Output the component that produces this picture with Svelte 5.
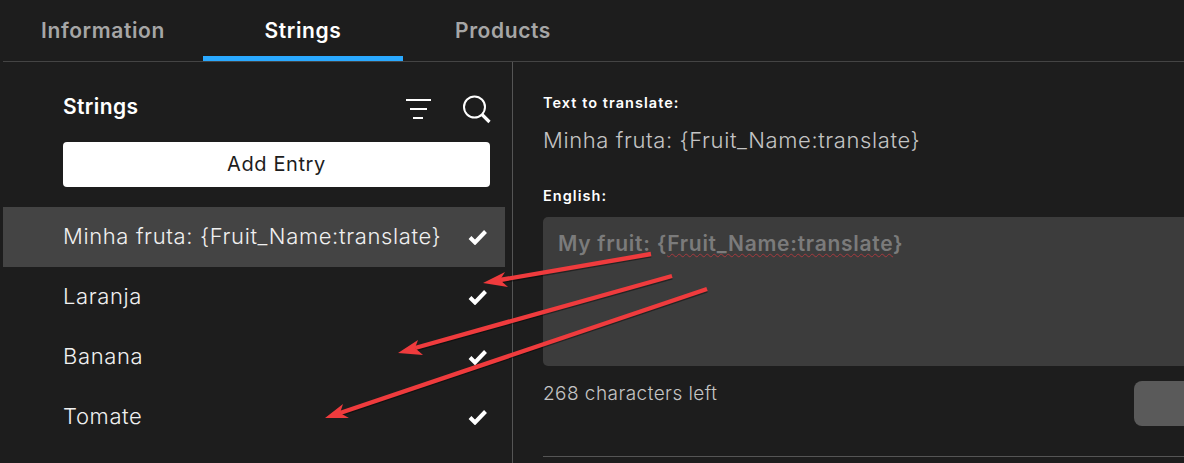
<script>
  const tabs = [
    { label: 'Information', active: false },
    { label: 'Strings', active: true },
    { label: 'Products', active: false }
  ];
  const items = ['Minha fruta: {Fruit_Name:translate}', 'Laranja', 'Banana', 'Tomate'];
  const arrows = [
    { x1: 651, y1: 254, x2: 500, y2: 280, head: '483,283 505,272 500,280 508,287' },
    { x1: 672, y1: 276, x2: 415, y2: 348, head: '398,353 418,340 415,348 423,355' },
    { x1: 707, y1: 289, x2: 340, y2: 413, head: '325,418 343,404 340,413 349,418' }
  ];
</script>

<div class="page">
  <nav class="tabs">
    {#each tabs as t}
      <div class="tab" class:active={t.active}>{t.label}</div>
    {/each}
  </nav>
  <div class="body">
    <aside class="side">
      <div class="head">
        <h2>Strings</h2>
        <div class="tools">
          <svg width="26" height="24" viewBox="0 0 26 24" fill="none" stroke="#fff" stroke-width="2">
            <path d="M0 4h25M4 13h17M7 22h10" />
          </svg>
          <svg class="search" width="28" height="28" viewBox="0 0 28 28" fill="none" stroke="#fff">
            <circle cx="11.5" cy="13" r="10.5" stroke-width="2" />
            <path d="M19 20.5l7.5 7.5" stroke-width="3.2" />
          </svg>
        </div>
      </div>
      <button class="add">Add Entry</button>
      <ul>
        {#each items as item, i}
          <li class:sel={i === 0}>
            <span>{item}</span>
            <svg width="20" height="16" viewBox="0 0 20 16" fill="none" stroke="#fff" stroke-width="4">
              <path d="M2 8.5l5 5L17.5 2.5" />
            </svg>
          </li>
        {/each}
      </ul>
    </aside>
    <main class="detail">
      <div class="label first">Text to translate:</div>
      <div class="source">Minha fruta: {'{'}Fruit_Name:translate{'}'}</div>
      <div class="label second">English:</div>
      <div class="area">My fruit: {'{'}<span class="wavy">Fruit_Name:translate</span>{'}'}</div>
      <div class="foot">
        <span>268 characters left</span>
        <div class="save"></div>
      </div>
      <hr />
    </main>
  </div>
  <svg class="overlay" width="1184" height="463" viewBox="0 0 1184 463">
    {#each arrows as a}
      <line x1={a.x1} y1={a.y1 + 1.5} x2={a.x2} y2={a.y2 + 1.5} stroke="#000" stroke-opacity=".4" stroke-width="4" />
      <line x1={a.x1} y1={a.y1} x2={a.x2} y2={a.y2} stroke="#ef3b3d" stroke-width="4.4" />
      <polygon points={a.head} fill="#ef3b3d" />
    {/each}
  </svg>
</div>

<style>
  :global(body) {
    margin: 0;
    background: #1d1d1d;
    font-family: Inter, "Noto Sans", sans-serif;
    overflow: hidden;
  }
  .page {
    position: relative;
    width: 1184px;
    height: 463px;
    overflow: hidden;
    color: #fff;
  }
  .tabs {
    display: flex;
    height: 61px;
    margin-left: 3px;
    border-bottom: 1px solid #444;
  }
  .tab {
    box-sizing: border-box;
    width: 200px;
    height: 61px;
    padding-top: 18px;
    text-align: center;
    font-size: 21px;
    letter-spacing: 0.6px;
    line-height: 25px;
    font-weight: 600;
    color: #a6a6a6;
  }
  .tab.active {
    color: #fff;
    border-bottom: 5px solid #2aa9ff;
  }
  .body {
    display: flex;
    height: 401px;
  }
  .side {
    box-sizing: border-box;
    width: 513px;
    padding-left: 3px;
    border-right: 1px solid #555;
    flex: none;
  }
  .head {
    display: flex;
    justify-content: space-between;
    align-items: center;
    height: 44px;
    margin: 24px 21px 12px 60px;
  }
  h2 {
    margin: 0;
    font-size: 21px;
    letter-spacing: 0.4px;
    font-weight: 600;
    line-height: 24px;
    position: relative;
    top: -1px;
  }
  .tools {
    display: flex;
    align-items: center;
    gap: 31px;
  }
  .search {
    overflow: visible;
  }
  .add {
    display: block;
    box-sizing: border-box;
    width: 427px;
    height: 45px;
    margin-left: 60px;
    padding: 0;
    border: 0;
    border-radius: 4px;
    background: #fff;
    color: #1d1d1d;
    font: 400 20px/45px Inter, "Noto Sans", sans-serif;
    letter-spacing: 0.6px;
    text-align: center;
  }
  ul {
    list-style: none;
    margin: 20px 0 0;
    padding: 0;
    width: 502px;
  }
  li {
    display: flex;
    align-items: center;
    justify-content: space-between;
    box-sizing: border-box;
    height: 60px;
    padding: 0 17px 0 60px;
    font-size: 22px;
    font-weight: 300;
    letter-spacing: 0.63px;
    color: #f0f0f0;
  }
  li span {
    position: relative;
    top: -1px;
  }
  li.sel {
    background: #444;
  }
  .detail {
    flex: 1;
    min-width: 0;
    padding-left: 30px;
  }
  .label {
    font-size: 14.5px;
    letter-spacing: 1.05px;
    font-weight: 600;
    line-height: 18px;
    color: #fff;
  }
  .first { margin-top: 32px; }
  .second { margin-top: 34px; }
  .source {
    margin-top: 15px;
    font-size: 22px;
    font-weight: 300;
    letter-spacing: 0.6px;
    line-height: 26px;
    color: #c4c4c4;
  }
  .area {
    box-sizing: border-box;
    height: 149px;
    margin-top: 12px;
    padding: 14px 15px;
    border-radius: 5px 0 0 5px;
    background: #3c3c3c;
    color: #7b7b7b;
    font-size: 21px;
    letter-spacing: 0.72px;
    line-height: 25px;
    font-weight: 600;
    white-space: nowrap;
  }
  .wavy {
    text-decoration: underline wavy #a63a3e 1px;
    text-underline-offset: 2px;
  }
  .foot {
    display: flex;
    justify-content: space-between;
    height: 45px;
    margin-top: 15px;
    font-size: 19px;
    font-weight: 300;
    letter-spacing: 0.45px;
    line-height: 26px;
    color: #c4c4c4;
  }
  .save {
    width: 50px;
    height: 45px;
    border-radius: 8px 0 0 8px;
    background: #5a5a5a;
  }
  hr {
    margin: 30px 0 0;
    border: 0;
    border-top: 1px solid #555;
  }
  .overlay {
    position: absolute;
    left: 0;
    top: 0;
    pointer-events: none;
  }
</style>
